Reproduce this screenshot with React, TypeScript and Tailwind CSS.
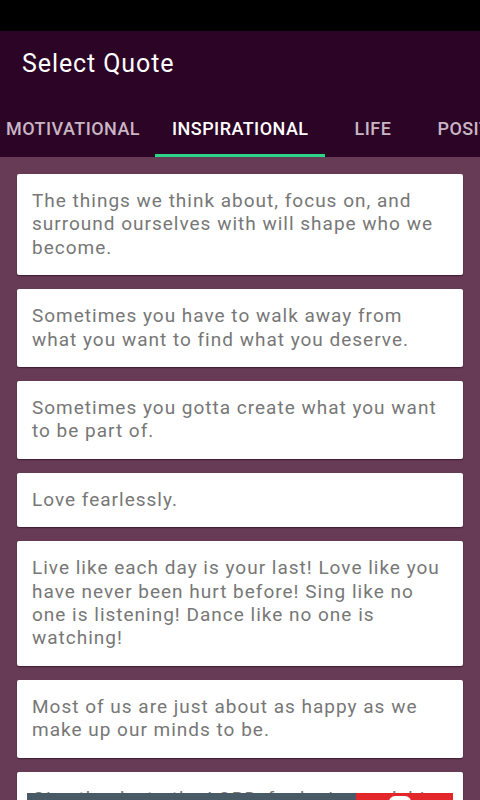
import React from "react";

const quotes = [
  "The things we think about, focus on, and surround ourselves with will shape who we become.",
  "Sometimes you have to walk away from what you want to find what you deserve.",
  "Sometimes you gotta create what you want to be part of.",
  "Love fearlessly.",
  "Live like each day is your last! Love like you have never been hurt before! Sing like no one is listening! Dance like no one is watching!",
  "Most of us are just about as happy as we make up our minds to be.",
  "Give thanks to the LORD, for he is good; his love endures forever.",
];

export default function App() {
  return (
    <div
      className="relative w-[480px] h-[800px] overflow-hidden bg-[#673b56]"
      style={{ fontFamily: "Roboto, 'Noto Sans', sans-serif" }}
    >
      <div className="h-[31px] bg-black" />
      <div className="bg-[#2c0426]">
        <div className="h-[64px] flex items-center pl-[22px]">
          <span className="text-white text-[25px] font-normal tracking-[0.9px] leading-none">Select Quote</span>
        </div>
        <div className="h-[62px] flex ml-[-11px] whitespace-nowrap overflow-hidden">
          <div className="shrink-0 pl-[17px] pr-[15px] pt-[5px] flex items-center text-[18px] font-medium tracking-[0.45px] text-[#c9b6c5]">MOTIVATIONAL</div>
          <div className="shrink-0 relative px-[17px] pt-[5px] flex items-center text-[18px] font-medium tracking-[0.45px] text-white">
            INSPIRATIONAL
            <div className="absolute left-0 right-0 bottom-0 h-[3px] bg-[#2bd488]" />
          </div>
          <div className="shrink-0 w-[95px] pt-[5px] flex items-center justify-center text-[18px] font-medium tracking-[0.45px] text-[#c9b6c5]">LIFE</div>
          <div className="shrink-0 px-[17px] pt-[5px] flex items-center text-[18px] font-medium tracking-[0.45px] text-[#c9b6c5]">POSITIVE</div>
        </div>
      </div>
      <div className="flex flex-col gap-[14px] px-[17px] pt-[17px]">
        {quotes.map((q, i) => (
          <div
            key={i}
            className="bg-white rounded-[2px] shadow-[0_1px_1.5px_rgba(30,0,20,0.55)] pt-[15px] pb-[16px] pl-[15px] pr-[10px]"
          >
            <p className="text-[19px] leading-[23.4px] tracking-[1px] text-[#777777]">{q}</p>
          </div>
        ))}
      </div>
      <div className="absolute left-[27px] top-[793px] w-[426px] h-[7px] flex">
        <div className="w-[329px] h-full bg-[#485a66]" />
        <div className="relative flex-1 h-full bg-[#e3262a] overflow-hidden">
          <div className="absolute left-[33px] top-[3px] w-[22px] h-[12px] rounded-full bg-white" />
        </div>
      </div>
    </div>
  );
}
